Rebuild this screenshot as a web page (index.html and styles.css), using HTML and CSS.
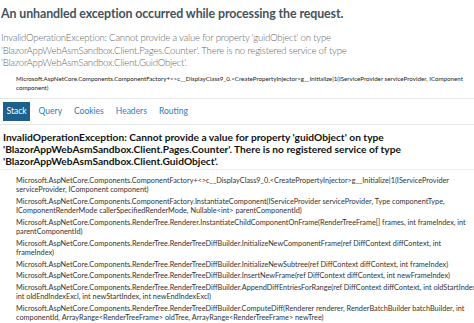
FILE: index.html
```html
<!DOCTYPE html>
<html lang="en">
<head>
<meta charset="utf-8">
<title>Internal Server Error</title>
<link rel="stylesheet" href="styles.css">
</head>
<body>
<h1 class="title">An unhandled exception occurred while processing the request.</h1>
<div class="titleerror">InvalidOperationException: Cannot provide a value for property 'guidObject' on type<br>'BlazorAppWebAsmSandbox.Client.Pages.Counter'. There is no registered service of type<br>'BlazorAppWebAsmSandbox.Client.GuidObject'.</div>
<p class="location">Microsoft.AspNetCore.Components.ComponentFactory+&lt;&gt;c__DisplayClass9_0.&lt;CreatePropertyInjector&gt;g__Initialize|1(IServiceProvider serviceProvider, IComponent<br>component)</p>
<ul class="tabs">
  <li class="tab selected">Stack</li>
  <li class="tab">Query</li>
  <li class="tab">Cookies</li>
  <li class="tab">Headers</li>
  <li class="tab">Routing</li>
</ul>
<div class="stackerror">
  <h2 class="details">InvalidOperationException: Cannot provide a value for property 'guidObject' on type<br>'BlazorAppWebAsmSandbox.Client.Pages.Counter'. There is no registered service of type<br>'BlazorAppWebAsmSandbox.Client.GuidObject'.</h2>
</div>
<ul class="frames">
  <li class="frame">Microsoft.AspNetCore.Components.ComponentFactory+&lt;&gt;c__DisplayClass9_0.&lt;CreatePropertyInjector&gt;g__Initialize|1(IServiceProvider<br>serviceProvider, IComponent component)</li>
  <li class="frame">Microsoft.AspNetCore.Components.ComponentFactory.InstantiateComponent(IServiceProvider serviceProvider, Type componentType,<br>IComponentRenderMode callerSpecifiedRenderMode, Nullable&lt;int&gt; parentComponentId)</li>
  <li class="frame">Microsoft.AspNetCore.Components.RenderTree.Renderer.InstantiateChildComponentOnFrame(RenderTreeFrame[] frames, int frameIndex, int<br>parentComponentId)</li>
  <li class="frame">Microsoft.AspNetCore.Components.RenderTree.RenderTreeDiffBuilder.InitializeNewComponentFrame(ref DiffContext diffContext, int<br>frameIndex)</li>
  <li class="frame">Microsoft.AspNetCore.Components.RenderTree.RenderTreeDiffBuilder.InitializeNewSubtree(ref DiffContext diffContext, int frameIndex)</li>
  <li class="frame">Microsoft.AspNetCore.Components.RenderTree.RenderTreeDiffBuilder.InsertNewFrame(ref DiffContext diffContext, int newFrameIndex)</li>
  <li class="frame">Microsoft.AspNetCore.Components.RenderTree.RenderTreeDiffBuilder.AppendDiffEntriesForRange(ref DiffContext diffContext, int oldStartIndex,<br>int oldEndIndexExcl, int newStartIndex, int newEndIndexExcl)</li>
  <li class="frame">Microsoft.AspNetCore.Components.RenderTree.RenderTreeDiffBuilder.ComputeDiff(Renderer renderer, RenderBatchBuilder batchBuilder, int<br>componentId, ArrayRange&lt;RenderTreeFrame&gt; oldTree, ArrayRange&lt;RenderTreeFrame&gt; newTree)</li>
</ul>
</body>
</html>
```
FILE: styles.css
```css
html, body {
  margin: 0;
  padding: 0;
  background: #ffffff;
}
body {
  font-family: Lato, "Open Sans", "Liberation Sans", sans-serif;
  color: #222222;
  overflow: hidden;
  padding-left: 1px;
}
.title {
  margin: 4px 0 0 0;
  font-size: 12.4px;
  letter-spacing: -0.1px;
  line-height: 20px;
  font-weight: 700;
  color: #44525e;
  white-space: nowrap;
}
.titleerror {
  margin-top: 8px;
  font-size: 9.6px;
  letter-spacing: -0.2px;
  line-height: 12.5px;
  font-weight: 300;
  color: #666666;
  white-space: nowrap;
}
.location {
  margin: 4px 0 0 15px;
  font-size: 6.2px;
  line-height: 9.5px;
  color: #222222;
  white-space: nowrap;
}
.tabs {
  list-style: none;
  display: flex;
  align-items: center;
  gap: 5px;
  margin: 5px 0 0 -1px;
  padding: 3px 0 3px 3px;
  border-top: 1px solid #e6e6e6;
  border-bottom: 1px solid #e6e6e6;
}
.tab {
  font-size: 8.5px;
  line-height: 19px;
  padding: 0 3.5px;
  color: #2f7bbf;
}
.tab.selected {
  background: #1f5f8b;
  color: #ffffff;
}
.stackerror {
  padding: 6px 0 2px 2px;
  border-bottom: 1px solid #eeeeee;
}
.details {
  margin: 0;
  font-size: 10.2px;
  line-height: 12px;
  font-weight: 700;
  color: #111111;
  white-space: nowrap;
}
.frames {
  list-style: none;
  margin: 0;
  padding: 5px 0 0 15px;
}
.frame {
  font-size: 7.3px;
  line-height: 9.5px;
  padding: 1px 0;
  color: #333333;
  white-space: nowrap;
}
```
